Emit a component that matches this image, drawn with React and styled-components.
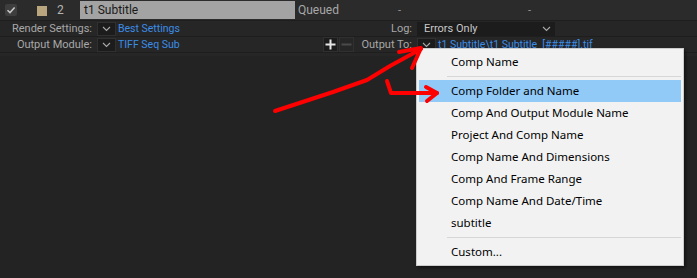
import styled, { createGlobalStyle } from "styled-components";

const GlobalStyle = createGlobalStyle`
  html, body {
    margin: 0;
    padding: 0;
    background: #232323;
  }
  body {
    font-family: Roboto, "Liberation Sans", sans-serif;
  }
`;

const menuItems = [
  "Comp Folder and Name",
  "Comp And Output Module Name",
  "Project And Comp Name",
  "Comp Name And Dimensions",
  "Comp And Frame Range",
  "Comp Name And Date/Time",
  "subtitle",
];

export default function App() {
  return (
    <>
      <GlobalStyle />
      <Panel>
        <QueueRow>
          <CheckBox>
            <svg width="10" height="10" viewBox="0 0 10 10">
              <path d="M1.5 5.2 L4 7.6 L8.6 2.4" stroke="#c8c8c8" strokeWidth="1.5" fill="none" />
            </svg>
          </CheckBox>
          <Swatch />
          <Index>2</Index>
          <NameField>t1 Subtitle</NameField>
          <Status>Queued</Status>
          <Dash>-</Dash>
          <Dash $wide>-</Dash>
        </QueueRow>
        <SettingRow>
          <Label>Render Settings:</Label>
          <DropBtn>
            <Chevron />
          </DropBtn>
          <LinkText>Best Settings</LinkText>
          <span />
          <Label $tight>Log:</Label>
          <Cell>
            <Select>
              Errors Only
              <Chevron />
            </Select>
          </Cell>
        </SettingRow>
        <SettingRow>
          <Label>Output Module:</Label>
          <DropBtn>
            <Chevron />
          </DropBtn>
          <LinkText>TIFF Seq Sub</LinkText>
          <Buttons>
            <SquareBtn>
              <svg width="11" height="11" viewBox="0 0 11 11">
                <path d="M5.5 0.5 V10.5 M0.5 5.5 H10.5" stroke="#e6e6e6" strokeWidth="2" />
              </svg>
            </SquareBtn>
            <SquareBtn $dim>
              <svg width="11" height="11" viewBox="0 0 11 11">
                <path d="M0.5 5.5 H10.5" stroke="#4a4a4a" strokeWidth="2" />
              </svg>
            </SquareBtn>
          </Buttons>
          <Label $tight>Output To:</Label>
          <Cell>
            <DropBtn>
              <Chevron />
            </DropBtn>
            <LinkText>t1 Subtitle\t1 Subtitle&nbsp;&nbsp;[#####].tif</LinkText>
          </Cell>
        </SettingRow>
        <Filler />

        <Menu>
          <MenuItem>Comp Name</MenuItem>
          <Separator />
          {menuItems.map((item, i) => (
            <MenuItem key={item} $active={i === 0}>
              {item}
            </MenuItem>
          ))}
          <Separator />
          <MenuItem>Custom...</MenuItem>
        </Menu>

        <Scribble width="697" height="278" viewBox="0 0 697 278">
          <g stroke="#ff0000" strokeWidth="4" fill="none" strokeLinecap="round" strokeLinejoin="round">
            <path d="M275 111 L333 92 L367 80 L390 66 L421 49" />
            <path d="M399 52 L421 48 L412 68" />
            <path d="M387 81 L391 93 L437 93" />
            <path d="M426 87 L437 93 L427 101" />
          </g>
        </Scribble>
      </Panel>
    </>
  );
}

function Chevron() {
  return (
    <svg width="9" height="6" viewBox="0 0 9 6">
      <path d="M1 1 L4.5 4.5 L8 1" stroke="#a8a8a8" strokeWidth="1.1" fill="none" />
    </svg>
  );
}

const Panel = styled.div`
  position: relative;
  width: 697px;
  height: 278px;
  overflow: hidden;
  background: #232323;
  font-size: 11px;
`;

const QueueRow = styled.div`
  height: 21px;
  box-sizing: border-box;
  display: flex;
  align-items: center;
  background: #2b2b2b;
  border-bottom: 1px solid #1e1e1e;
  color: #a8a8a8;
`;

const CheckBox = styled.div`
  width: 12px;
  height: 12px;
  margin-left: 5px;
  background: #3e3e3e;
  border-radius: 2px;
  display: flex;
  align-items: center;
  justify-content: center;
`;

const Swatch = styled.div`
  width: 10px;
  height: 10px;
  margin-left: 20px;
  margin-top: 2px;
  background: #baa67e;
`;

const Index = styled.span`
  margin-left: 10px;
  width: 23px;
  font-size: 12px;
  color: #b4b4b4;
`;

const NameField = styled.div`
  width: 211px;
  height: 18px;
  line-height: 18px;
  padding-left: 4px;
  background: #a3a3a3;
  color: #1a1a1a;
  font-size: 12px;
`;

const Status = styled.span`
  width: 100px;
  padding-left: 3px;
  font-size: 12px;
  color: #a8a8a8;
`;

const Dash = styled.span`
  width: ${(p) => (p.$wide ? "30px" : "130px")};
  color: #9a9a9a;
`;

const SettingRow = styled.div`
  height: 16px;
  box-sizing: border-box;
  display: grid;
  grid-template-columns: 97px 19px 205px 33px 58px 1fr;
  align-items: center;
  background: #262626;
  border-bottom: 1px solid #1e1e1e;
`;

const Filler = styled.div`
  height: 3px;
  background: #262626;
`;

const Label = styled.span`
  text-align: right;
  padding-right: ${(p) => (p.$tight ? "0" : "5px")};
  color: #a8a8a8;
  white-space: nowrap;
  font-size: 11px;
`;

const DropBtn = styled.div`
  width: 19px;
  height: 14px;
  box-sizing: border-box;
  display: flex;
  align-items: center;
  justify-content: center;
  background: #1c1c1c;
  border: 1px solid #303030;
  flex-shrink: 0;
`;

const LinkText = styled.span`
  padding-left: 2px;
  color: #3b8de6;
  white-space: nowrap;
  font-size: 10.5px;
`;

const Cell = styled.div`
  display: flex;
  align-items: center;
  padding-left: 5px;
`;

const Select = styled.div`
  width: 138px;
  height: 14px;
  box-sizing: border-box;
  padding: 0 4px 0 7px;
  display: flex;
  align-items: center;
  justify-content: space-between;
  background: #1c1c1c;
  color: #c8c8c8;
  font-size: 11px;
`;

const Buttons = styled.div`
  display: flex;
  gap: 1px;
  padding-left: 2px;
`;

const SquareBtn = styled.div`
  width: 15px;
  height: 15px;
  box-sizing: border-box;
  display: flex;
  align-items: center;
  justify-content: center;
  background: ${(p) => (p.$dim ? "#262626" : "#1c1c1c")};
  border: 1px solid #303030;
`;

const Menu = styled.div`
  position: absolute;
  left: 416px;
  top: 48px;
  width: 268px;
  box-sizing: border-box;
  padding: 2px;
  background: #f2f2f2;
  border: 1px solid #cccccc;
  box-shadow: 2px 2px 3px rgba(0, 0, 0, 0.45);
  font-family: "Noto Sans", "Open Sans", sans-serif;
  font-size: 11.5px;
  color: #000;
`;

const MenuItem = styled.div`
  height: 22px;
  line-height: 22px;
  padding-left: 32px;
  background: ${(p) => (p.$active ? "#91c9f7" : "transparent")};
`;

const Separator = styled.div`
  height: 1px;
  margin: 3px 0 3px 28px;
  background: #d7d7d7;
`;

const Scribble = styled.svg`
  position: absolute;
  left: 0;
  top: 0;
  pointer-events: none;
`;
